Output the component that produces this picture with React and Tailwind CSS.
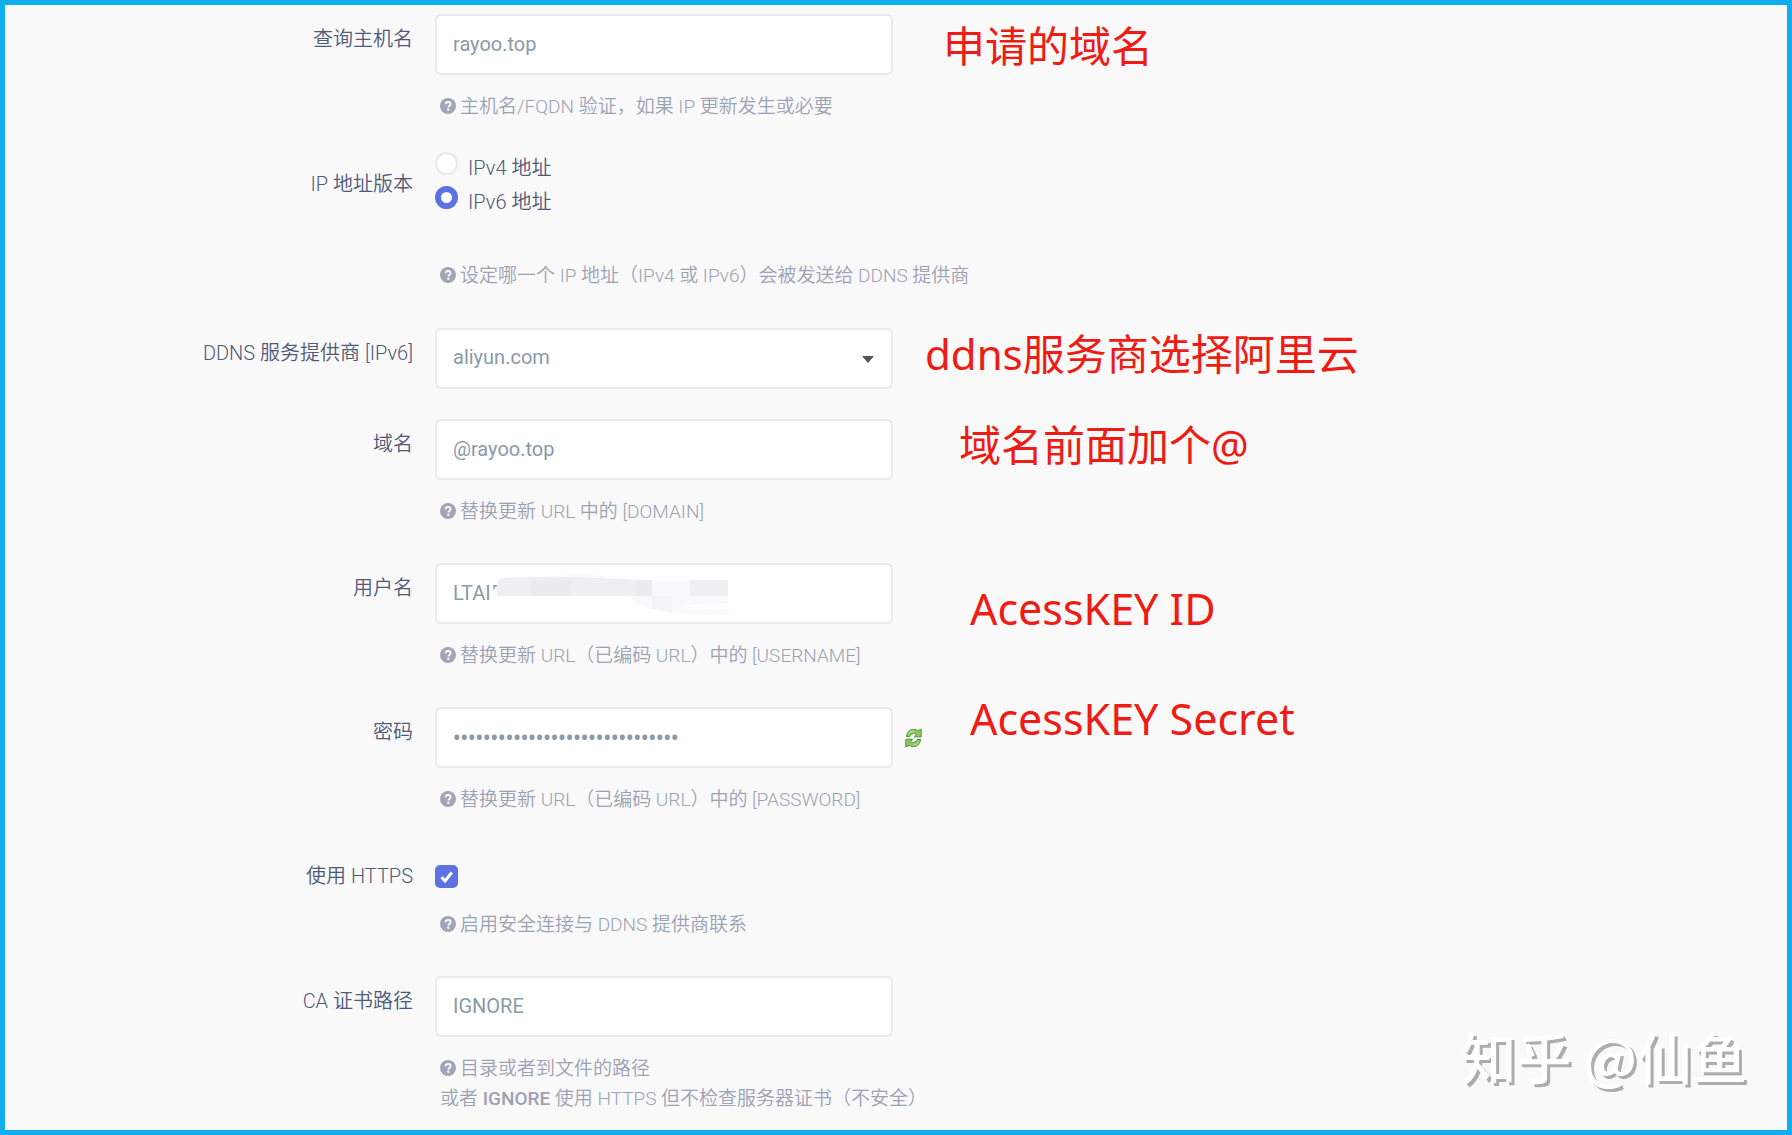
function HelpIcon() {
  return (
    <svg viewBox="0 0 16 16" className="mr-1 inline-block h-4 w-4 align-[-1px]" aria-hidden="true">
      <circle cx="8" cy="8" r="8" fill="#a0a6b5" />
      <path d="M5.6 6.2C5.7 4.8 6.7 4 8.1 4c1.4 0 2.5.8 2.5 2.1 0 1.8-2.2 1.8-2.2 3.3" fill="none" stroke="#f9f9f9" strokeWidth="1.9" />
      <circle cx="8.3" cy="11.8" r="1.2" fill="#f9f9f9" />
    </svg>
  );
}

function RefreshIcon() {
  return (
    <svg viewBox="0 0 17 20" className="h-5 w-[17px]" aria-hidden="true">
      <g fill="#8cc860" stroke="#4f9440" strokeWidth="1" strokeLinejoin="round">
        <path d="M1.500 8.500C2 4 4.500 1.500 8.500 1.500c2 0 3.300.500 4.300 1.200L16.200 1.200v7.600h-7l2.400-2.500C9 4.800 6 5.500 5 8.500z" />
        <path d="M15.500 11.500c-.500 4.500-3 7-7 7-2 0-3.300-.500-4.300-1.200L.8 18.800v-7.600h7l-2.400 2.500c2.600 1.500 5.600.800 6.600-2.200z" />
      </g>
      <path d="M3.500 6C4.500 4 6.500 2.900 8.600 3.100M13.500 14c-1 2-3 3.100-5.100 2.900" fill="none" stroke="#c4e8a0" strokeWidth="1" />
    </svg>
  );
}

function Redaction() {
  return (
    <svg viewBox="0 0 260 56" className="pointer-events-none absolute top-[3px] left-[55px] h-14 w-[260px]" aria-hidden="true">
      <path d="M2 40V25L7 20V12Q60 4 90 5T162 14H238V54H170Q140 40 100 40z" fill="#fefefe" />
      <path d="M7 30V17q1-5 6-5 80-3 149 3v15z" fill="#eeeff1" />
      <path d="M40 13h40v17H40zM146 14h16v16h-16z" fill="#ebecee" />
      <path d="M60 11q30-5 60 0z" fill="#f8f9fa" />
      <path d="M162 15h30l46-1v30q-4 5 14 4-40 4-90-5z" fill="#f8f9fa" />
      <path d="M200 14h38v16h-38z" fill="#eeeff1" />
      <path d="M162 30h20v17l-20-4z" fill="#f2f4f6" />
      <path d="M138 30h24v13l-16-6z" fill="#f8f9fa" />
      <path d="M190 39l48-2v6q-24 1-48-4z" fill="#fefefe" />
    </svg>
  );
}

function Row({ label, htmlFor, labelClass = "pt-[10px]", className = "pb-9", side, children }) {
  const Tag = htmlFor ? "label" : "div";
  return (
    <div className={`grid grid-cols-[minmax(0,430fr)_minmax(0,458fr)_minmax(0,894fr)] ${className}`}>
      <Tag
        htmlFor={htmlFor}
        id={htmlFor ? undefined : "ip-version-label"}
        className={`pr-[22px] text-right text-xl leading-[30px] ${labelClass}`}
      >
        {label}
      </Tag>
      <div>{children}</div>
      <div>{side}</div>
    </div>
  );
}

function Help({ children, className = "mt-[17px]" }) {
  return (
    <p className={`ml-[5px] text-[19px] leading-[30px] whitespace-nowrap text-[#9ca2b3] ${className}`}>
      <HelpIcon />
      {children}
    </p>
  );
}

const field =
  "block h-[61px] w-full rounded-md border-2 border-[#e8e9eb] bg-white px-4 text-xl text-[#8a9aa7] outline-none";

function Field({ id, value, type = "text", className = "pb-0.5 font-normal" }) {
  return <input id={id} type={type} defaultValue={value} className={`${field} ${className}`} />;
}

function Radio({ children, defaultChecked }) {
  return (
    <label className="flex h-[34px] items-start text-xl leading-8">
      <input
        type="radio"
        name="ipver"
        defaultChecked={defaultChecked}
        className="mr-[10px] h-[23px] w-[23px] appearance-none rounded-full border-2 border-[#e8e9eb] bg-white checked:border-6 checked:border-[#5e72e4]"
      />
      {children}
    </label>
  );
}

function Note({ children, className }) {
  return <p className={`whitespace-nowrap font-normal text-[#ee1c14] ${className}`}>{children}</p>;
}

const cjkNote = "font-['Noto_Sans','Noto_Sans_CJK_SC',sans-serif] text-[42px] leading-[60px]";
const latinNote = "font-['Noto_Sans','Noto_Sans_CJK_SC',sans-serif] text-[43px] leading-[60px]";

export default function App() {
  return (
    <main
      lang="zh-CN"
      className="relative min-h-screen overflow-hidden border-5 border-[#0faeed] bg-[#f9f9f9] pt-[9px] font-['Roboto','Noto_Sans_CJK_SC',sans-serif] font-[350] text-[#4f5a78]"
    >
      <form>
        <Row label="查询主机名" htmlFor="host" className="pb-[30px]" side={<Note className={`pl-[50px] pt-0.5 ${cjkNote}`}>申请的域名</Note>}>
          <Field id="host" value="rayoo.top" />
          <Help>主机名/FQDN 验证，如果 IP 更新发生或必要</Help>
        </Row>

        <Row label="IP 地址版本" labelClass="pt-[17px]" className="pb-[37px]">
          <div role="radiogroup" aria-labelledby="ip-version-label">
            <Radio>IPv4 地址</Radio>
            <Radio defaultChecked>IPv6 地址</Radio>
          </div>
          <Help className="mt-[41px]">设定哪一个 IP 地址（IPv4 或 IPv6）会被发送给 DDNS 提供商</Help>
        </Row>

        <Row
          label="DDNS 服务提供商 [IPv6]"
          htmlFor="provider"
          className="pb-[30px]"
          side={<Note className={`-mt-1 pl-8 ${cjkNote}`}>ddns服务商选择阿里云</Note>}
        >
          <div className="relative">
            <select id="provider" className={`${field} appearance-none pb-1 font-normal`}>
              <option>aliyun.com</option>
            </select>
            <svg viewBox="0 0 12 7" className="pointer-events-none absolute top-[28px] right-[19px] h-[7px] w-3" aria-hidden="true">
              <path d="M0 0h12L6 7z" fill="#555" />
            </svg>
          </div>
        </Row>

        <Row label="域名" htmlFor="domain" side={<Note className={`-mt-1 pl-[66px] ${cjkNote}`}>域名前面加个@</Note>}>
          <Field id="domain" value="@rayoo.top" />
          <Help>替换更新 URL 中的 [DOMAIN]</Help>
        </Row>

        <Row label="用户名" htmlFor="user" side={<Note className={`pt-4 pl-[77px] ${latinNote}`}>AcessKEY ID</Note>}>
          <div className="relative">
            <Field id="user" value="LTAI5" />
            <Redaction />
          </div>
          <Help>替换更新 URL（已编码 URL）中的 [USERNAME]</Help>
        </Row>

        <Row
          label="密码"
          htmlFor="pass"
          side={
            <div className="flex items-start">
              <button type="button" aria-label="显示密码" className="mt-[21px] ml-3">
                <RefreshIcon />
              </button>
              <Note className={`-mt-[18px] pl-12 ${latinNote}`}>AcessKEY Secret</Note>
            </div>
          }
        >
          <Field
            id="pass"
            type="password"
            value="123456789012345678901234567890"
            className="font-['Open_Sans','Noto_Sans_CJK_SC',sans-serif] font-semibold"
          />
          <Help>替换更新 URL（已编码 URL）中的 [PASSWORD]</Help>
        </Row>

        <Row label="使用 HTTPS" htmlFor="https" className="pb-9">
          <div className="relative mt-[14px] h-[23px] w-[23px]">
            <input id="https" type="checkbox" defaultChecked className="block h-[23px] w-[23px] appearance-none rounded-[5px] border-2 border-[#e8e9eb] bg-white checked:border-[#5e72e4] checked:bg-[#5e72e4]" />
            <svg viewBox="0 0 23 23" className="pointer-events-none absolute inset-0 h-[23px] w-[23px]" aria-hidden="true">
              <path d="M6.500 12.200l3.600 3.700 6.700-8.400" fill="none" stroke="#fff" strokeWidth="3" />
            </svg>
          </div>
          <Help className="mt-[22px]">启用安全连接与 DDNS 提供商联系</Help>
        </Row>

        <Row label="CA 证书路径" htmlFor="ca" className="pb-0">
          <Field id="ca" value="IGNORE" />
          <Help>
            目录或者到文件的路径
            <br />
            或者 <strong className="font-medium">IGNORE</strong> 使用 HTTPS 但不检查服务器证书（不安全）
          </Help>
        </Row>
      </form>

      <p className="absolute right-[40px] bottom-[37px] font-['Noto_Sans_CJK_SC',sans-serif] text-[55px] leading-[76px] font-medium whitespace-nowrap text-white [text-shadow:3px_3px_0_#adadad]">
        知乎 @仙鱼
      </p>
    </main>
  );
}
